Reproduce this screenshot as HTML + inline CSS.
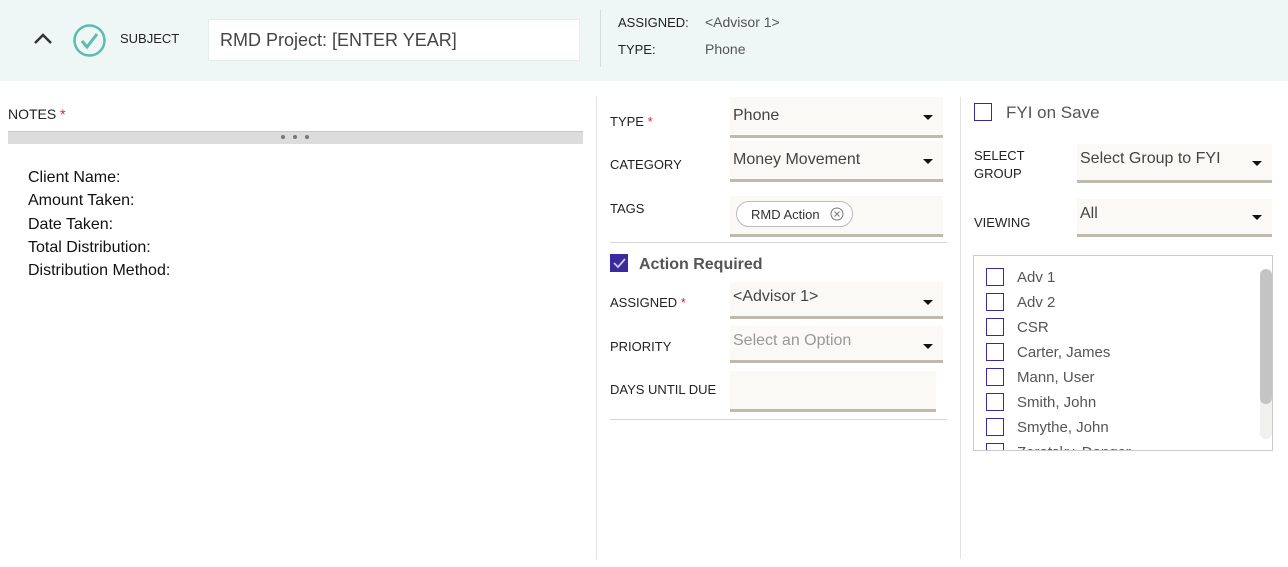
<!DOCTYPE html>
<html><head><style>
*{margin:0;padding:0;box-sizing:border-box}
body{width:1288px;height:567px;background:#fff;font-family:"Liberation Sans",sans-serif;position:relative;overflow:hidden;color:#222}
.a{position:absolute;white-space:nowrap}
.lbl{font-size:13px;color:#222}
.star{color:#e02020}
.fld{position:absolute;background:#faf9f5;border-bottom:3px solid #c0b9ad;font-size:16px;color:#444;padding:10px 0 0 3px}
.fld .car{position:absolute;right:10px;top:18px;width:0;height:0;border-left:5px solid transparent;border-right:5px solid transparent;border-top:5px solid #111}
.cb{position:absolute;width:18px;height:18px;border:1.5px solid #3a2aa0;background:#fff}
.it{position:absolute;left:1017px;font-size:15px;color:#555}
</style></head><body>
<div class="a" style="left:0;top:0;width:1288px;height:81px;background:#eef7f5"></div>
<svg class="a" style="left:32px;top:30px" width="22" height="16"><path d="M3 13 L11 5 L19 13" stroke="#333" stroke-width="2.5" fill="none"/></svg>
<svg class="a" style="left:72px;top:23px" width="36" height="36"><circle cx="17.5" cy="17.5" r="15" stroke="#5cbcae" stroke-width="2.5" fill="none"/><path d="M10 18 L15 24 L25 11" stroke="#5cbcae" stroke-width="3" fill="none"/></svg>
<div class="a lbl" style="left:120px;top:31px">SUBJECT</div>
<div class="a" style="left:208px;top:19px;width:372px;height:42px;background:#fff;border:1px solid #e6ecea;font-size:18px;color:#444;padding:10px 0 0 11px">RMD Project: [ENTER YEAR]</div>
<div class="a" style="left:600px;top:10px;width:1px;height:57px;background:#d8dcdb"></div>
<div class="a lbl" style="left:618px;top:15px">ASSIGNED:</div>
<div class="a" style="left:705px;top:14px;font-size:14px;color:#555">&lt;Advisor 1&gt;</div>
<div class="a lbl" style="left:618px;top:42px">TYPE:</div>
<div class="a" style="left:705px;top:41px;font-size:14px;color:#555">Phone</div>

<div class="a lbl" style="left:8px;top:106px;font-size:14px">NOTES <span class="star">*</span></div>
<div class="a" style="left:8px;top:131px;width:575px;height:13px;background:#dcdcdc;border-top:1px solid #c8c8c8"></div>
<div class="a" style="left:281px;top:135px;font-size:0"><span style="display:inline-block;width:4px;height:4px;border-radius:2px;background:#777;margin-right:8px"></span><span style="display:inline-block;width:4px;height:4px;border-radius:2px;background:#777;margin-right:8px"></span><span style="display:inline-block;width:4px;height:4px;border-radius:2px;background:#777"></span></div>
<div class="a" style="left:28px;top:166px;font-size:16px;line-height:23.3px;color:#111">Client Name:<br>Amount Taken:<br>Date Taken:<br>Total Distribution:<br>Distribution Method:</div>

<div class="a" style="left:596px;top:97px;width:1px;height:462px;background:#e3e3e3"></div>
<div class="a" style="left:960px;top:97px;width:1px;height:462px;background:#e3e3e3"></div>

<div class="a lbl" style="left:610px;top:114px">TYPE <span class="star">*</span></div>
<div class="fld" style="left:730px;top:97px;width:213px;height:41px;padding-top:10px">Phone<div class="car"></div></div>
<div class="a lbl" style="left:610px;top:157px">CATEGORY</div>
<div class="fld" style="left:730px;top:141px;width:213px;height:41px;padding-top:10px">Money Movement<div class="car"></div></div>
<div class="a lbl" style="left:610px;top:201px">TAGS</div>
<div class="fld" style="left:730px;top:196px;width:213px;height:41px"></div>
<div class="a" style="left:736px;top:201px;width:117px;height:26px;border:1px solid #bbb;border-radius:13px;background:#fff;font-size:13px;color:#333;padding:5px 0 0 14px">RMD Action</div>
<svg class="a" style="left:829px;top:206px" width="16" height="16"><circle cx="8" cy="8" r="6" stroke="#777" fill="none"/><path d="M5.5 5.5L10.5 10.5M10.5 5.5L5.5 10.5" stroke="#777"/></svg>
<div class="a" style="left:610px;top:242px;width:337px;height:1px;background:#d6d6d6"></div>
<div class="a" style="left:610px;top:254px;width:18px;height:18px;background:#3a2aa0"></div>
<svg class="a" style="left:610px;top:254px" width="18" height="18"><path d="M4 9 L8 13 L15 5" stroke="#ccc" stroke-width="1.8" fill="none"/></svg>
<div class="a" style="left:639px;top:256px;font-size:16px;font-weight:bold;color:#555">Action Required</div>
<div class="a lbl" style="left:610px;top:295px">ASSIGNED <span class="star">*</span></div>
<div class="fld" style="left:730px;top:282px;width:213px;height:37px;padding-top:6px">&lt;Advisor 1&gt;<div class="car"></div></div>
<div class="a lbl" style="left:610px;top:339px">PRIORITY</div>
<div class="fld" style="left:730px;top:326px;width:213px;height:37px;padding-top:6px;color:#999">Select an Option<div class="car"></div></div>
<div class="a lbl" style="left:610px;top:382px">DAYS UNTIL DUE</div>
<div class="fld" style="left:730px;top:371px;width:206px;height:41px"></div>
<div class="a" style="left:610px;top:419px;width:337px;height:1px;background:#d6d6d6"></div>

<div class="cb" style="left:974px;top:103px"></div>
<div class="a" style="left:1006px;top:103px;font-size:17px;color:#555">FYI on Save</div>
<div class="a lbl" style="left:974px;top:147px;line-height:18px">SELECT<br>GROUP</div>
<div class="fld" style="left:1077px;top:144px;width:195px;height:39px;padding-top:6px">Select Group to FYI<div class="car" style="top:17px"></div></div>
<div class="a lbl" style="left:974px;top:215px">VIEWING</div>
<div class="fld" style="left:1077px;top:199px;width:195px;height:38px;padding-top:6px">All<div class="car" style="top:16px"></div></div>
<div class="a" style="left:973px;top:255px;width:300px;height:196px;border:1px solid #ccc;overflow:hidden">
<div class="a" style="left:286px;top:13px;width:12px;height:170px;border-radius:6px;background:#f0f0ee"></div>
<div class="a" style="left:286px;top:13px;width:12px;height:135px;border-radius:6px;background:#c4c4c4"></div>
</div>
<div class="cb" style="left:986px;top:268px"></div><div class="it" style="top:269px">Adv 1</div>
<div class="cb" style="left:986px;top:293px"></div><div class="it" style="top:294px">Adv 2</div>
<div class="cb" style="left:986px;top:318px"></div><div class="it" style="top:319px">CSR</div>
<div class="cb" style="left:986px;top:343px"></div><div class="it" style="top:344px">Carter, James</div>
<div class="cb" style="left:986px;top:368px"></div><div class="it" style="top:369px">Mann, User</div>
<div class="cb" style="left:986px;top:393px"></div><div class="it" style="top:394px">Smith, John</div>
<div class="cb" style="left:986px;top:418px"></div><div class="it" style="top:419px">Smythe, John</div>
<div class="a" style="left:974px;top:443px;width:284px;height:7px;overflow:hidden"><div class="cb" style="left:12px;top:0"></div><div class="a" style="left:43px;top:1px;font-size:15px;color:#555">Zeratsky, Danger</div></div>
</body></html>
